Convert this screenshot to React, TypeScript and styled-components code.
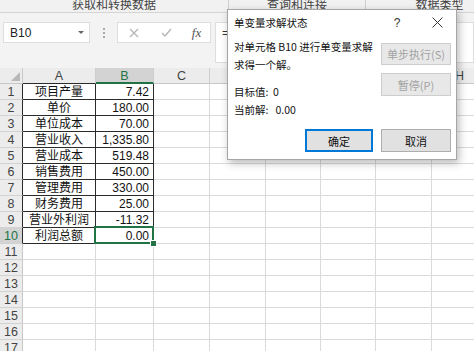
import React from 'react'
import styled, { createGlobalStyle } from 'styled-components'

const GlobalStyle = createGlobalStyle`
  html, body {
    margin: 0;
    padding: 0;
  }
  body {
    background: #fff;
    font-family: "Noto Sans CJK SC", sans-serif;
  }
`

const GREEN = '#217346'
const GRID = '#dadada'
const INK = '#2b2b2b'

const Screen = styled.div`
  position: relative;
  width: 474px;
  height: 351px;
  overflow: hidden;
  background: #f3f3f3;
`

/* ribbon group captions, cut off at the top */
const GroupStrip = styled.div`
  display: flex;
  height: 12px;
  border-bottom: 1px solid #d5d5d5;
  background: #f1f1f1;
  overflow: hidden;
`

const GroupLabel = styled.div<{ $w: number }>`
  flex: 0 0 ${p => p.$w}px;
  box-sizing: border-box;
  height: 12px;
  border-right: 1px solid #cfcfcf;
  text-align: center;
  font-size: 12px;
  line-height: 7px;
  color: #444;
  white-space: nowrap;
`

const Toolbar = styled.div`
  display: flex;
  align-items: flex-start;
  padding: 9px 0 5px 3px;
`

const NameBox = styled.div`
  box-sizing: border-box;
  width: 87px;
  height: 21px;
  display: flex;
  align-items: center;
  justify-content: space-between;
  padding: 0 5px 0 6px;
  background: #fff;
  border: 1px solid #dedede;
  font: 12px "Liberation Sans", sans-serif;
  color: #222;
`

const DropArrow = styled.span`
  width: 0;
  height: 0;
  border-left: 3px solid transparent;
  border-right: 3px solid transparent;
  border-top: 3px solid #666;
`

const Grip = styled.div`
  width: 27px;
  height: 21px;
  display: flex;
  flex-direction: column;
  align-items: center;
  justify-content: center;
  gap: 2px;
`

const GripDot = styled.span`
  width: 2px;
  height: 2px;
  background: #a8a8a8;
`

const FxGroup = styled.div`
  box-sizing: border-box;
  width: 94px;
  height: 21px;
  display: flex;
  align-items: center;
  background: #fff;
  border: 1px solid #dedede;
`

const FxSlot = styled.div<{ $w: number }>`
  width: ${p => p.$w}px;
  display: flex;
  justify-content: center;
  align-items: center;
`

const FxText = styled.span`
  font: italic 13px "Liberation Serif", serif;
  color: #555;
`

const FormulaBox = styled.div`
  box-sizing: border-box;
  flex: 1;
  height: 41px;
  margin-left: 4px;
  padding: 2px 0 0 6px;
  background: #fff;
  border: 1px solid #dedede;
  font: 12px/16px "Liberation Sans", sans-serif;
  color: #333;
  white-space: nowrap;
`

const cols = [73, 58, 56, 56, 55, 55, 56, 56]
const template = ['23px', ...cols.map(c => `${c}px`)].join(' ')

const Sheet = styled.div`
  display: grid;
  grid-template-columns: ${template};
  grid-auto-rows: 16px;
  background: #fff;
`

const Corner = styled.div`
  box-sizing: border-box;
  display: flex;
  align-items: flex-end;
  justify-content: flex-end;
  padding: 0 2px 2px 0;
  background: #ececec;
  border-right: 1px solid #c8c8c8;
  border-bottom: 1px solid #c8c8c8;
`

const CornerMark = styled.span`
  width: 0;
  height: 0;
  border-left: 9px solid transparent;
  border-bottom: 9px solid #b9b9b9;
`

const ColHeader = styled.div<{ $active?: boolean; $edge?: boolean }>`
  box-sizing: border-box;
  background: ${p => (p.$active ? '#d3d3d3' : '#ececec')};
  border-right: 1px solid #cdcdcd;
  border-bottom: ${p =>
    p.$active ? `2px solid ${GREEN}` : `1px solid ${p.$edge ? INK : '#c8c8c8'}`};
  text-align: center;
  font: 12.5px/16px "Liberation Sans", sans-serif;
  color: ${p => (p.$active ? GREEN : '#444')};
`

const RowHeader = styled.div<{ $active?: boolean; $edge?: boolean }>`
  box-sizing: border-box;
  background: ${p => (p.$active ? '#d3d3d3' : '#ececec')};
  border-right: 1px solid ${p => (p.$edge ? INK : '#c8c8c8')};
  border-bottom: 1px solid #d2d2d2;
  text-align: center;
  font: 12.5px/17px "Liberation Sans", sans-serif;
  color: ${p => (p.$active ? GREEN : '#444')};
`

const Cell = styled.div<{
  $align?: 'center' | 'right'
  $boxed?: boolean
  $selected?: boolean
}>`
  position: relative;
  box-sizing: border-box;
  padding: 0 4px;
  background: #fff;
  border-right: 1px solid ${p => (p.$boxed ? INK : GRID)};
  border-bottom: 1px solid ${p => (p.$boxed ? INK : GRID)};
  text-align: ${p => p.$align ?? 'left'};
  font: 12px/17px "Liberation Sans", "Noto Sans CJK SC", sans-serif;
  color: #111;
  white-space: nowrap;

  ${p =>
    p.$selected &&
    `
    &::after {
      content: '';
      position: absolute;
      left: -2px;
      top: -2px;
      right: -1px;
      bottom: -1px;
      border: 2px solid ${GREEN};
      pointer-events: none;
    }
    &::before {
      content: '';
      position: absolute;
      right: -4px;
      bottom: -4px;
      width: 5px;
      height: 5px;
      background: ${GREEN};
      border: 1px solid #fff;
      z-index: 1;
    }
  `}
`

/* dialog */
const Dialog = styled.div`
  position: absolute;
  left: 227px;
  top: 9px;
  width: 230px;
  height: 151px;
  box-sizing: border-box;
  display: flex;
  flex-direction: column;
  background: #fff;
  border: 1px solid #a6a6a6;
  box-shadow: 2px 3px 8px rgba(0, 0, 0, 0.28);
  font-family: "Noto Sans CJK SC", sans-serif;
  color: #111;
`

const TitleBar = styled.div`
  height: 25px;
  display: flex;
  align-items: center;
  padding-left: 6px;
`

const Title = styled.div`
  flex: 1;
  font-size: 10.5px;
`

const Help = styled.div`
  width: 14px;
  margin-right: 14px;
  text-align: center;
  font: 12px "Liberation Sans", sans-serif;
  color: #333;
`

const Close = styled.div`
  width: 38px;
  display: flex;
  justify-content: center;
`

const Body = styled.div`
  flex: 1;
  display: flex;
  flex-direction: column;
  padding: 3px 5px 7px 6px;
`

const Top = styled.div`
  display: flex;
  justify-content: space-between;
`

const Message = styled.div`
  flex: 1;
  min-width: 0;
  font-size: 10.5px;
  line-height: 18px;
  white-space: nowrap;
`

const Stat = styled.div`
  white-space: pre;
`

const StatGroup = styled.div`
  margin-top: 9px;
`

const SideButtons = styled.div`
  flex: 0 0 70px;
  display: flex;
  flex-direction: column;
  gap: 8px;
  margin-top: 5px;
`

const Footer = styled.div`
  display: flex;
  justify-content: flex-end;
  gap: 8px;
  margin-top: auto;
`

const Button = styled.div<{ $w?: number; $disabled?: boolean; $focus?: boolean; $h?: number }>`
  box-sizing: border-box;
  width: ${p => p.$w ?? 70}px;
  height: ${p => p.$h ?? 22}px;
  display: flex;
  align-items: center;
  justify-content: center;
  background: ${p => (p.$disabled ? '#e8e8e8' : '#e1e1e1')};
  border: ${p =>
    p.$focus ? '2px solid #0078d7' : `1px solid ${p.$disabled ? '#cdcdcd' : '#adadad'}`};
  font-size: 11px;
  color: ${p => (p.$disabled ? '#a2a2a2' : '#111')};
`

const rows: [string, string][] = [
  ['项目产量', '7.42'],
  ['单价', '180.00'],
  ['单位成本', '70.00'],
  ['营业收入', '1,335.80'],
  ['营业成本', '519.48'],
  ['销售费用', '450.00'],
  ['管理费用', '330.00'],
  ['财务费用', '25.00'],
  ['营业外利润', '-11.32'],
  ['利润总额', '0.00'],
]

const letters = ['A', 'B', 'C', 'D', 'E', 'F', 'G', 'H']
const TOTAL_ROWS = 17

export default function App() {
  return (
    <>
      <GlobalStyle />
      <Screen>
        <GroupStrip>
          <GroupLabel $w={229}>获取和转换数据</GroupLabel>
          <GroupLabel $w={137}>查询和连接</GroupLabel>
          <GroupLabel $w={148}>数据类型</GroupLabel>
        </GroupStrip>

        <Toolbar>
          <NameBox>
            B10
            <DropArrow />
          </NameBox>
          <Grip>
            <GripDot />
            <GripDot />
            <GripDot />
          </Grip>
          <FxGroup>
            <FxSlot $w={32}>
              <svg width="10" height="10" viewBox="0 0 10 10">
                <path d="M1 1L9 9M9 1L1 9" stroke="#b5b5b5" strokeWidth="1.2" fill="none" />
              </svg>
            </FxSlot>
            <FxSlot $w={33}>
              <svg width="11" height="9" viewBox="0 0 11 9">
                <path d="M1 5L4 8L10 1" stroke="#b5b5b5" strokeWidth="1.3" fill="none" />
              </svg>
            </FxSlot>
            <FxSlot $w={27}>
              <FxText>fx</FxText>
            </FxSlot>
          </FxGroup>
          <FormulaBox>=B4-B5-B6-B7-B8+B9</FormulaBox>
        </Toolbar>

        <Sheet>
          <Corner>
            <CornerMark />
          </Corner>
          {letters.map((l, i) => (
            <ColHeader key={l} $active={l === 'B'} $edge={i < 2}>
              {l}
            </ColHeader>
          ))}
          {Array.from({ length: TOTAL_ROWS }, (_, r) => {
            const data = rows[r]
            return (
              <React.Fragment key={r}>
                <RowHeader $active={r === 9} $edge={r < 10}>
                  {r + 1}
                </RowHeader>
                {letters.map((l, c) => {
                  if (data && c === 0)
                    return (
                      <Cell key={l} $align="center" $boxed>
                        {data[0]}
                      </Cell>
                    )
                  if (data && c === 1)
                    return (
                      <Cell key={l} $align="right" $boxed $selected={r === 9}>
                        {data[1]}
                      </Cell>
                    )
                  return <Cell key={l} />
                })}
              </React.Fragment>
            )
          })}
        </Sheet>

        <Dialog>
          <TitleBar>
            <Title>单变量求解状态</Title>
            <Help>?</Help>
            <Close>
              <svg width="11" height="11" viewBox="0 0 11 11">
                <path d="M0.5 0.5L10.5 10.5M10.5 0.5L0.5 10.5" stroke="#333" strokeWidth="1" fill="none" />
              </svg>
            </Close>
          </TitleBar>
          <Body>
            <Top>
              <Message>
                <div>对单元格 B10 进行单变量求解</div>
                <div>求得一个解。</div>
                <StatGroup>
                  <Stat>目标值:  0</Stat>
                  <Stat>当前解:   0.00</Stat>
                </StatGroup>
              </Message>
              <SideButtons>
                <Button $disabled>单步执行(S)</Button>
                <Button $disabled $h={23}>暂停(P)</Button>
              </SideButtons>
            </Top>
            <Footer>
              <Button $w={68} $h={23} $focus>
                确定
              </Button>
              <Button $h={23}>取消</Button>
            </Footer>
          </Body>
        </Dialog>
      </Screen>
    </>
  )
}
